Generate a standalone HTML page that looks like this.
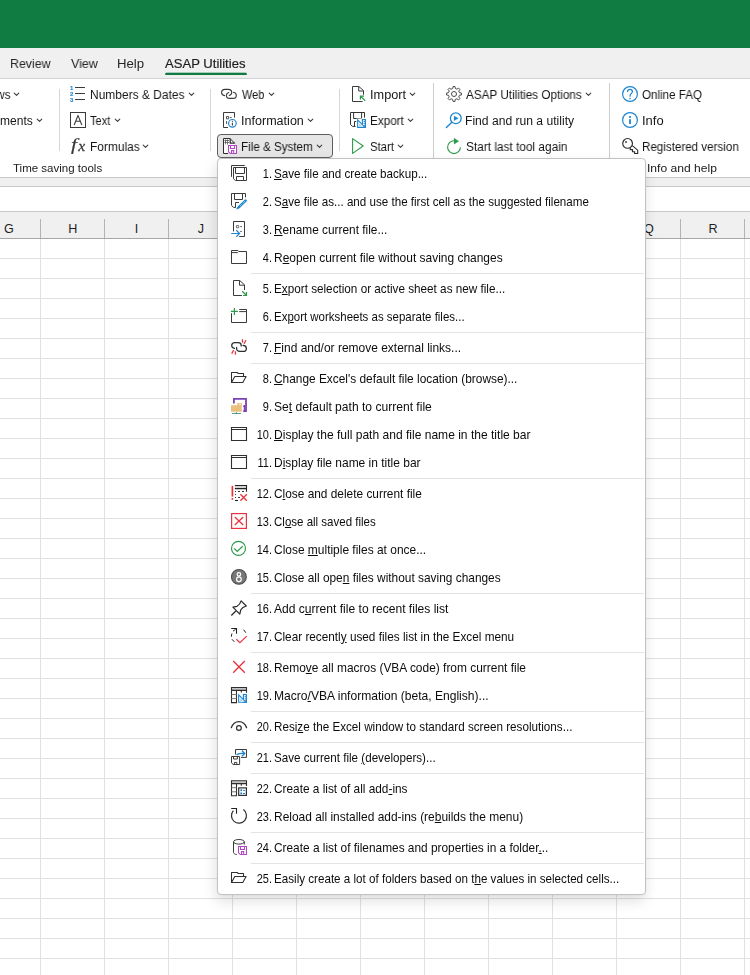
<!DOCTYPE html>
<html><head><meta charset="utf-8"><title>ASAP Utilities - File &amp; System</title>
<style>
html,body{margin:0;padding:0}
body{width:750px;height:975px;position:relative;overflow:hidden;background:#fff;font-family:"Liberation Sans",sans-serif}
body>div,body>svg,body>span{position:absolute}
.t{white-space:pre;line-height:16px;transform-origin:0 50%;display:block}
.g{will-change:transform}
.t u{text-decoration:underline;text-decoration-thickness:1px;text-underline-offset:0.5px}
</style></head><body>
<div style="left:0px;top:0px;width:750px;height:48px;background:#107c41;"></div>
<div style="left:0px;top:48px;width:750px;height:30px;background:#f0f0f0;"></div>
<div style="left:0px;top:78px;width:750px;height:1px;background:#d2d2d2;"></div>
<div style="left:0px;top:177px;width:750px;height:1px;background:#c8c8c8;"></div>
<div style="left:0px;top:178px;width:750px;height:8px;background:#f0f0f0;"></div>
<div style="left:0px;top:186px;width:750px;height:1px;background:#c8c8c8;"></div>
<div style="left:0px;top:211px;width:750px;height:1px;background:#c8c8c8;"></div>
<div style="left:0px;top:212px;width:750px;height:26px;background:#f0f0f0;"></div>
<div style="left:0px;top:238px;width:750px;height:1px;background:#a6a6a6;"></div>
<div style="left:165px;top:73px;width:82px;height:2px;background:#107c41;border-radius:1px;"></div>
<div style="left:166px;top:72px;width:80px;height:1px;background:#107c41;opacity:0.3;"></div>
<div style="left:40px;top:219px;width:1px;height:19px;background:#b4b4b4;"></div>
<div style="left:40px;top:239px;width:1px;height:736px;background:#e1e1e1;"></div>
<div style="left:104px;top:219px;width:1px;height:19px;background:#b4b4b4;"></div>
<div style="left:104px;top:239px;width:1px;height:736px;background:#e1e1e1;"></div>
<div style="left:168px;top:219px;width:1px;height:19px;background:#b4b4b4;"></div>
<div style="left:168px;top:239px;width:1px;height:736px;background:#e1e1e1;"></div>
<div style="left:232px;top:219px;width:1px;height:19px;background:#b4b4b4;"></div>
<div style="left:232px;top:239px;width:1px;height:736px;background:#e1e1e1;"></div>
<div style="left:296px;top:219px;width:1px;height:19px;background:#b4b4b4;"></div>
<div style="left:296px;top:239px;width:1px;height:736px;background:#e1e1e1;"></div>
<div style="left:360px;top:219px;width:1px;height:19px;background:#b4b4b4;"></div>
<div style="left:360px;top:239px;width:1px;height:736px;background:#e1e1e1;"></div>
<div style="left:424px;top:219px;width:1px;height:19px;background:#b4b4b4;"></div>
<div style="left:424px;top:239px;width:1px;height:736px;background:#e1e1e1;"></div>
<div style="left:488px;top:219px;width:1px;height:19px;background:#b4b4b4;"></div>
<div style="left:488px;top:239px;width:1px;height:736px;background:#e1e1e1;"></div>
<div style="left:552px;top:219px;width:1px;height:19px;background:#b4b4b4;"></div>
<div style="left:552px;top:239px;width:1px;height:736px;background:#e1e1e1;"></div>
<div style="left:616px;top:219px;width:1px;height:19px;background:#b4b4b4;"></div>
<div style="left:616px;top:239px;width:1px;height:736px;background:#e1e1e1;"></div>
<div style="left:680px;top:219px;width:1px;height:19px;background:#b4b4b4;"></div>
<div style="left:680px;top:239px;width:1px;height:736px;background:#e1e1e1;"></div>
<div style="left:744px;top:219px;width:1px;height:19px;background:#b4b4b4;"></div>
<div style="left:744px;top:239px;width:1px;height:736px;background:#e1e1e1;"></div>
<div style="left:0px;top:258px;width:750px;height:1px;background:#e1e1e1;"></div>
<div style="left:0px;top:278px;width:750px;height:1px;background:#e1e1e1;"></div>
<div style="left:0px;top:298px;width:750px;height:1px;background:#e1e1e1;"></div>
<div style="left:0px;top:318px;width:750px;height:1px;background:#e1e1e1;"></div>
<div style="left:0px;top:338px;width:750px;height:1px;background:#e1e1e1;"></div>
<div style="left:0px;top:358px;width:750px;height:1px;background:#e1e1e1;"></div>
<div style="left:0px;top:378px;width:750px;height:1px;background:#e1e1e1;"></div>
<div style="left:0px;top:398px;width:750px;height:1px;background:#e1e1e1;"></div>
<div style="left:0px;top:418px;width:750px;height:1px;background:#e1e1e1;"></div>
<div style="left:0px;top:438px;width:750px;height:1px;background:#e1e1e1;"></div>
<div style="left:0px;top:458px;width:750px;height:1px;background:#e1e1e1;"></div>
<div style="left:0px;top:478px;width:750px;height:1px;background:#e1e1e1;"></div>
<div style="left:0px;top:498px;width:750px;height:1px;background:#e1e1e1;"></div>
<div style="left:0px;top:518px;width:750px;height:1px;background:#e1e1e1;"></div>
<div style="left:0px;top:538px;width:750px;height:1px;background:#e1e1e1;"></div>
<div style="left:0px;top:558px;width:750px;height:1px;background:#e1e1e1;"></div>
<div style="left:0px;top:578px;width:750px;height:1px;background:#e1e1e1;"></div>
<div style="left:0px;top:598px;width:750px;height:1px;background:#e1e1e1;"></div>
<div style="left:0px;top:618px;width:750px;height:1px;background:#e1e1e1;"></div>
<div style="left:0px;top:638px;width:750px;height:1px;background:#e1e1e1;"></div>
<div style="left:0px;top:658px;width:750px;height:1px;background:#e1e1e1;"></div>
<div style="left:0px;top:678px;width:750px;height:1px;background:#e1e1e1;"></div>
<div style="left:0px;top:698px;width:750px;height:1px;background:#e1e1e1;"></div>
<div style="left:0px;top:718px;width:750px;height:1px;background:#e1e1e1;"></div>
<div style="left:0px;top:738px;width:750px;height:1px;background:#e1e1e1;"></div>
<div style="left:0px;top:758px;width:750px;height:1px;background:#e1e1e1;"></div>
<div style="left:0px;top:778px;width:750px;height:1px;background:#e1e1e1;"></div>
<div style="left:0px;top:798px;width:750px;height:1px;background:#e1e1e1;"></div>
<div style="left:0px;top:818px;width:750px;height:1px;background:#e1e1e1;"></div>
<div style="left:0px;top:838px;width:750px;height:1px;background:#e1e1e1;"></div>
<div style="left:0px;top:858px;width:750px;height:1px;background:#e1e1e1;"></div>
<div style="left:0px;top:878px;width:750px;height:1px;background:#e1e1e1;"></div>
<div style="left:0px;top:898px;width:750px;height:1px;background:#e1e1e1;"></div>
<div style="left:0px;top:918px;width:750px;height:1px;background:#e1e1e1;"></div>
<div style="left:0px;top:938px;width:750px;height:1px;background:#e1e1e1;"></div>
<div style="left:0px;top:958px;width:750px;height:1px;background:#e1e1e1;"></div>
<div style="left:59px;top:89px;width:1px;height:62px;background:#d6d6d6;"></div>
<div style="left:210px;top:89px;width:1px;height:62px;background:#d6d6d6;"></div>
<div style="left:339px;top:89px;width:1px;height:62px;background:#d6d6d6;"></div>
<div style="left:433px;top:83px;width:1px;height:90px;background:#cecece;"></div>
<div style="left:609px;top:83px;width:1px;height:90px;background:#cecece;"></div>
<div style="left:217px;top:134px;width:114px;height:22px;background:#e6e6e6;border:1px solid #5e5e5e;border-radius:4px"></div>
<svg style="left:13.20px;top:92.3px" width="7" height="5" viewBox="0 0 7 5"><path d="M1.2 1.1 L3.5 3.4 L5.8 1.1" fill="none" stroke="#3a3a3a" stroke-width="1.05" stroke-linecap="round" stroke-linejoin="round"/></svg>
<svg style="left:36.30px;top:118.3px" width="7" height="5" viewBox="0 0 7 5"><path d="M1.2 1.1 L3.5 3.4 L5.8 1.1" fill="none" stroke="#3a3a3a" stroke-width="1.05" stroke-linecap="round" stroke-linejoin="round"/></svg>
<svg style="left:187.60px;top:92.3px" width="7" height="5" viewBox="0 0 7 5"><path d="M1.2 1.1 L3.5 3.4 L5.8 1.1" fill="none" stroke="#3a3a3a" stroke-width="1.05" stroke-linecap="round" stroke-linejoin="round"/></svg>
<svg style="left:114.10px;top:118.3px" width="7" height="5" viewBox="0 0 7 5"><path d="M1.2 1.1 L3.5 3.4 L5.8 1.1" fill="none" stroke="#3a3a3a" stroke-width="1.05" stroke-linecap="round" stroke-linejoin="round"/></svg>
<svg style="left:142.10px;top:144.3px" width="7" height="5" viewBox="0 0 7 5"><path d="M1.2 1.1 L3.5 3.4 L5.8 1.1" fill="none" stroke="#3a3a3a" stroke-width="1.05" stroke-linecap="round" stroke-linejoin="round"/></svg>
<svg style="left:268.00px;top:92.3px" width="7" height="5" viewBox="0 0 7 5"><path d="M1.2 1.1 L3.5 3.4 L5.8 1.1" fill="none" stroke="#3a3a3a" stroke-width="1.05" stroke-linecap="round" stroke-linejoin="round"/></svg>
<svg style="left:306.70px;top:118.3px" width="7" height="5" viewBox="0 0 7 5"><path d="M1.2 1.1 L3.5 3.4 L5.8 1.1" fill="none" stroke="#3a3a3a" stroke-width="1.05" stroke-linecap="round" stroke-linejoin="round"/></svg>
<svg style="left:409.20px;top:92.3px" width="7" height="5" viewBox="0 0 7 5"><path d="M1.2 1.1 L3.5 3.4 L5.8 1.1" fill="none" stroke="#3a3a3a" stroke-width="1.05" stroke-linecap="round" stroke-linejoin="round"/></svg>
<svg style="left:407.00px;top:118.3px" width="7" height="5" viewBox="0 0 7 5"><path d="M1.2 1.1 L3.5 3.4 L5.8 1.1" fill="none" stroke="#3a3a3a" stroke-width="1.05" stroke-linecap="round" stroke-linejoin="round"/></svg>
<svg style="left:397.20px;top:144.3px" width="7" height="5" viewBox="0 0 7 5"><path d="M1.2 1.1 L3.5 3.4 L5.8 1.1" fill="none" stroke="#3a3a3a" stroke-width="1.05" stroke-linecap="round" stroke-linejoin="round"/></svg>
<svg style="left:585.20px;top:92.3px" width="7" height="5" viewBox="0 0 7 5"><path d="M1.2 1.1 L3.5 3.4 L5.8 1.1" fill="none" stroke="#3a3a3a" stroke-width="1.05" stroke-linecap="round" stroke-linejoin="round"/></svg>
<svg style="left:316.30px;top:144.3px" width="7" height="5" viewBox="0 0 7 5"><path d="M1.2 1.1 L3.5 3.4 L5.8 1.1" fill="none" stroke="#3a3a3a" stroke-width="1.05" stroke-linecap="round" stroke-linejoin="round"/></svg>
<svg style="left:0;top:0" width="750" height="180" viewBox="0 0 750 180"><path d="M228 153.5 H223.5 V138.5 H230 L234.6 143.2 V146 H228 Z" fill="#fff" stroke="none" stroke-width="0" /><path d="M228 153.5 H223.5 V138.5 H230 L234.6 143.2" fill="none" stroke="#2e2e2e" stroke-width="1" stroke-linejoin="round"/><path d="M230.2 138.5 V143.2 H234.8" fill="none" stroke="#2e2e2e" stroke-width="1.25" stroke-linejoin="miter"/><path d="M224.4 140.5 H229.2 M224.4 142.5 H229.2 M225.5 139.4 V144.4 M227.5 139.4 V144.4" fill="none" stroke="#666" stroke-width="0.9" /><path d="M228.5 145.5 H236.5 V153.5 H230.3 L228.5 151.8 Z" fill="#fff" stroke="#b247c4" stroke-width="1.05" stroke-linejoin="miter"/><path d="M230.5 145.5 V148.5 H234.5 V145.5" fill="none" stroke="#b247c4" stroke-width="1.05" /><path d="M231.5 153.5 V150.6 H233.7 V153.5" fill="none" stroke="#b247c4" stroke-width="1.05" /></svg>
<svg style="left:0;top:0;will-change:transform" width="750" height="180" viewBox="0 0 750 180"><g font-family="Liberation Sans" font-weight="700" font-size="6px" fill="#1e86d0" stroke="#1e86d0" stroke-width="0.12"><text x="69.9" y="90.1">1</text><text x="69.9" y="96.1">2</text><text x="69.9" y="102.1">3</text></g><path d="M75 87.5 H85 M75 93.5 H85 M75 99.5 H85" fill="none" stroke="#3b3b3b" stroke-width="1" /><rect x="70.5" y="112.5" width="15" height="15" fill="#fff" stroke="#3b3b3b"/><path d="M74.2 125 L78 115.4 L81.8 125 M75.6 121.3 H80.4" fill="none" stroke="#3b3b3b" stroke-width="1.1" stroke-linejoin="round"/><text transform="translate(70.9 150.3) scale(1.22 1)" font-family="Liberation Serif" font-style="italic" font-size="17.5px" fill="#383838" stroke="#383838" stroke-width="0.22">f</text><text transform="translate(78.2 150.9) scale(1.08 1)" font-family="Liberation Serif" font-style="italic" font-size="14.5px" fill="#383838" stroke="#383838" stroke-width="0.25">x</text><path d="M224.6 95.6 C222.6 95.3 221.6 94 221.6 92.5 C221.6 90.6 223.1 89.4 225 89.4 H228.2 C230.2 89.4 231.7 90.6 231.7 92.5 C231.7 93.9 230.7 95 229.2 95.4" fill="none" stroke="#383838" stroke-width="1.08" stroke-linecap="round"/><path d="M233.4 92.3 C235.2 92.6 236.3 93.8 236.3 95.4 C236.3 97.2 234.8 98.4 233 98.4 H229.8 C227.8 98.4 226.4 97.2 226.4 95.4 C226.4 94 227.4 92.9 228.8 92.5" fill="none" stroke="#383838" stroke-width="1.08" stroke-linecap="round"/><path d="M234.5 117.6 V112.5 H223.5 V127.5 H228" fill="none" stroke="#3b3b3b" stroke-width="1" /><path d="M226.5 116.5 h2.1 v2.4 h-2.1 Z M229.8 117.6 h1.9 M226.6 121 v3" fill="none" stroke="#555" stroke-width="1" /><circle cx="232.4" cy="123.3" r="3.8" fill="#fff" stroke="#1e86d0" stroke-width="1.2"/><path d="M232.4 122.8 V125.6" fill="none" stroke="#3b3b3b" stroke-width="1.1" /><circle cx="232.4" cy="121.3" r="0.65" fill="#3b3b3b"/><path d="M363.5 94.8 V90.6 L358.9 86.5 H352.5 V101.5 H362.6 M358.7 86.5 V91 H363.5" fill="none" stroke="#3b3b3b" stroke-width="1" stroke-linejoin="round"/><path d="M365.2 100.8 L360.6 96.4 M360.4 99.6 V96.2 H364" fill="none" stroke="#2b9a4b" stroke-width="1.2" /><path d="M364.5 117.6 V112.5 H350.5 V124.6 L352.6 126.4 H355.6 M353.6 112.5 V118.5 H361.6 V112.5 M354.5 126.4 V121.5 H356.6" fill="none" stroke="#333" stroke-width="1" stroke-linejoin="miter"/><rect x="356.5" y="118.5" width="10" height="10" fill="#fff"/><rect x="362.4" y="119.6" width="3" height="7.8" fill="#fff" stroke="#1e86d0" stroke-width="1.15"/><path d="M363.6 121.5 H365 M363.6 123.4 H365 M364 125.3 H365" stroke="#1e86d0" stroke-width="0.9" fill="none"/><path d="M357.65 119.9 L365.1 127.35 H357.65 Z" fill="#fff" stroke="#1e86d0" stroke-width="1.1" stroke-linejoin="miter"/><path d="M359.5 123.7 L361.6 125.8 H359.5 Z" fill="#1e86d0" opacity="0.75"/><rect x="360.0" y="124.7" width="0.8" height="0.8" fill="#fff" opacity="0.8"/><path d="M352.6 138.6 L363.2 146 L352.6 153.4 Z" fill="none" stroke="#2b9a4b" stroke-width="1.1" stroke-linejoin="round"/><path d="M452.69 88.55 L453.00 86.57 L455.00 86.57 L455.31 88.55 L456.93 89.23 L458.55 88.04 L459.96 89.45 L458.77 91.07 L459.45 92.69 L461.43 93.00 L461.43 95.00 L459.45 95.31 L458.77 96.93 L459.96 98.55 L458.55 99.96 L456.93 98.77 L455.31 99.45 L455.00 101.43 L453.00 101.43 L452.69 99.45 L451.07 98.77 L449.45 99.96 L448.04 98.55 L449.23 96.93 L448.55 95.31 L446.57 95.00 L446.57 93.00 L448.55 92.69 L449.23 91.07 L448.04 89.45 L449.45 88.04 L451.07 89.23 Z" fill="none" stroke="#4a4a4a" stroke-width="1" stroke-linejoin="round"/><circle cx="454" cy="94" r="2.5" fill="none" stroke="#4a4a4a" stroke-width="1"/><circle cx="455.8" cy="118.3" r="5.4" fill="none" stroke="#1e86d0" stroke-width="1.3"/><path d="M451.6 122.5 L446.4 127.6" fill="none" stroke="#1e86d0" stroke-width="1.4" stroke-linecap="round"/><path d="M454 116 L458.4 118.3 L454 120.7 Z" fill="#1e86d0" stroke="#1e86d0" stroke-width="0.2" /><path d="M454 140.8 A6.4 6.4 0 1 0 460.4 147.2" fill="none" stroke="#2b9a4b" stroke-width="1.1" /><path d="M454 138 L458.8 141.2 L454 144.2 Z" fill="#2b9a4b" stroke="#2b9a4b" stroke-width="0.2" /><circle cx="630" cy="94" r="7.4" fill="none" stroke="#1e86d0" stroke-width="1.2"/><path d="M627.6 91.6 C627.6 90 628.6 89.4 630 89.4 C631.4 89.4 632.4 90.2 632.4 91.5 C632.4 93.4 630 93.6 630 96.2" fill="none" stroke="#1e86d0" stroke-width="1.2" stroke-linecap="round"/><circle cx="630" cy="98.6" r="0.8" fill="#1e86d0"/><circle cx="630" cy="120" r="7.4" fill="none" stroke="#1e86d0" stroke-width="1.2"/><rect x="629.1" y="119.2" width="1.8" height="4.8" fill="#1e86d0"/><rect x="629.1" y="116.1" width="1.8" height="1.8" fill="#1e86d0"/><circle cx="627.6" cy="143.4" r="4.85" fill="#fff" stroke="#2c2c2c" stroke-width="1.15"/><rect x="625.2" y="141.2" width="1.6" height="1.6" fill="#2c2c2c"/><path d="M632.3 145.6 L637.7 150.2 V153.5 H634.6 V151.8 H632.5 V149.6 H630.3 V147.7" fill="none" stroke="#2c2c2c" stroke-width="1.1" stroke-linejoin="miter"/></svg>
<span class="t g" style="left:10.35px;top:56.10px;font-size:13px;color:#262626;transform:scaleX(0.9518);">Review</span>
<span class="t g" style="left:71.06px;top:56.10px;font-size:13px;color:#262626;transform:scaleX(0.9622);">View</span>
<span class="t g" style="left:117.39px;top:56.10px;font-size:13px;color:#262626;transform:scaleX(1.0139);">Help</span>
<span class="t g" style="left:165.40px;top:56.10px;font-size:13px;color:#1c1c1c;transform:scaleX(1.0063);-webkit-text-stroke:0.18px #1c1c1c;">ASAP Utilities</span>
<span class="t g" style="left:-4.50px;top:86.84px;font-size:12px;color:#161616;transform:scaleX(0.9825);">ws</span>
<span class="t g" style="left:0.25px;top:112.84px;font-size:12px;color:#161616;transform:scaleX(1.0032);">ments</span>
<span class="t g" style="left:89.60px;top:86.84px;font-size:12px;color:#161616;transform:scaleX(0.9973);">Numbers &amp; Dates</span>
<span class="t g" style="left:90.37px;top:112.84px;font-size:12px;color:#161616;transform:scaleX(0.9195);">Text</span>
<span class="t g" style="left:89.61px;top:138.84px;font-size:12px;color:#161616;transform:scaleX(0.9938);">Formulas</span>
<span class="t g" style="left:242.00px;top:86.84px;font-size:12px;color:#161616;transform:scaleX(0.9167);">Web</span>
<span class="t g" style="left:240.95px;top:112.84px;font-size:12px;color:#161616;transform:scaleX(1.0472);">Information</span>
<span class="t g" style="left:241.03px;top:138.84px;font-size:12px;color:#161616;transform:scaleX(0.9689);">File &amp; System</span>
<span class="t g" style="left:369.54px;top:86.84px;font-size:12px;color:#161616;transform:scaleX(1.0606);">Import</span>
<span class="t g" style="left:369.62px;top:112.84px;font-size:12px;color:#161616;transform:scaleX(0.9778);">Export</span>
<span class="t g" style="left:370.13px;top:138.84px;font-size:12px;color:#161616;transform:scaleX(0.9455);">Start</span>
<span class="t g" style="left:466.40px;top:86.84px;font-size:12px;color:#161616;transform:scaleX(0.9763);">ASAP Utilities Options</span>
<span class="t g" style="left:465.39px;top:112.84px;font-size:12px;color:#161616;transform:scaleX(1.0093);">Find and run a utility</span>
<span class="t g" style="left:465.91px;top:138.84px;font-size:12px;color:#161616;transform:scaleX(0.9872);">Start last tool again</span>
<span class="t g" style="left:642.12px;top:86.84px;font-size:12px;color:#161616;transform:scaleX(0.9672);">Online FAQ</span>
<span class="t g" style="left:641.52px;top:112.84px;font-size:12px;color:#161616;transform:scaleX(1.0811);">Info</span>
<span class="t g" style="left:641.63px;top:138.84px;font-size:12px;color:#161616;transform:scaleX(0.9669);">Registered version</span>
<span class="t g" style="left:12.75px;top:160.02px;font-size:11.5px;color:#202020;transform:scaleX(1.0011);">Time saving tools</span>
<span class="t g" style="left:646.55px;top:160.02px;font-size:11.5px;color:#202020;transform:scaleX(1.0523);">Info and help</span>
<span class="t" style="left:8.80px;top:220.63px;font-size:12.6px;color:#1e1e1e;transform:translateX(-50%);">G</span>
<span class="t" style="left:72.90px;top:220.63px;font-size:12.6px;color:#1e1e1e;transform:translateX(-50%);">H</span>
<span class="t" style="left:136.60px;top:220.63px;font-size:12.6px;color:#1e1e1e;transform:translateX(-50%);">I</span>
<span class="t" style="left:200.80px;top:220.63px;font-size:12.6px;color:#1e1e1e;transform:translateX(-50%);">J</span>
<span class="t" style="left:648.90px;top:220.63px;font-size:12.6px;color:#1e1e1e;transform:translateX(-50%);">Q</span>
<span class="t" style="left:713.10px;top:220.63px;font-size:12.6px;color:#1e1e1e;transform:translateX(-50%);">R</span>
<div id="menu" style="left:217px;top:158px;width:427px;height:735px;background:#fff;border:1px solid #c2c2c2;border-radius:4px;box-shadow:-1px 6px 14px rgba(0,0,0,0.13),0 1px 3px rgba(0,0,0,0.04)"></div>
<div style="left:251px;top:273px;width:393px;height:1px;background:#e3e3e3"></div>
<div style="left:251px;top:332px;width:393px;height:1px;background:#e3e3e3"></div>
<div style="left:251px;top:363px;width:393px;height:1px;background:#e3e3e3"></div>
<div style="left:251px;top:478px;width:393px;height:1px;background:#e3e3e3"></div>
<div style="left:251px;top:593px;width:393px;height:1px;background:#e3e3e3"></div>
<div style="left:251px;top:652px;width:393px;height:1px;background:#e3e3e3"></div>
<div style="left:251px;top:711px;width:393px;height:1px;background:#e3e3e3"></div>
<div style="left:251px;top:742px;width:393px;height:1px;background:#e3e3e3"></div>
<div style="left:251px;top:773px;width:393px;height:1px;background:#e3e3e3"></div>
<div style="left:251px;top:832px;width:393px;height:1px;background:#e3e3e3"></div>
<div style="left:251px;top:863px;width:393px;height:1px;background:#e3e3e3"></div>
<svg style="left:0;top:0" width="750" height="975" viewBox="0 0 750 975"><path d="M231.5 176.8 V165.5 H244.8" fill="none" stroke="#3b3b3b" stroke-width="1" /><path d="M233.5 167.5 H246.5 V180.5 H235.4 L233.5 178.8 Z M235.5 167.5 V173.5 H244.5 V167.5 M236.5 180.5 V176.5 H243.5 V180.5" fill="none" stroke="#3b3b3b" stroke-width="1" stroke-linejoin="miter"/><path d="M245.5 197.4 V193.5 H231.5 V205.4 L233.6 207.4 H235.8 M234.5 193.5 V199.5 H242.5 V193.5 M235.5 207.4 V202.5 H239" fill="none" stroke="#3b3b3b" stroke-width="1" stroke-linejoin="miter"/><path d="M245.6 200.6 L238.6 207.4" fill="none" stroke="#1e86d0" stroke-width="2.6" stroke-linecap="round"/><path d="M238.6 207.4 L237 208.8" fill="none" stroke="#1e86d0" stroke-width="1.2" stroke-linecap="round"/><path d="M245 201.2 L239.6 206.4" fill="none" stroke="#fff" stroke-width="0.7" stroke-dasharray="1 0.9"/><path d="M233.5 231.4 V221.5 H244.5 V236.5 H239.2" fill="none" stroke="#3b3b3b" stroke-width="1" /><path d="M236.5 225.6 h2.2 v2.2 h-2.2 Z" fill="none" stroke="#666" stroke-width="0.9" /><path d="M240.2 226.6 H242 M240.2 231.4 H242" fill="none" stroke="#555" stroke-width="0.9" /><path d="M231.2 233.5 H239.4 M236.3 230.3 L239.6 233.5 L236.3 236.7" fill="none" stroke="#1e86d0" stroke-width="1.2" /><path d="M231.5 250.5 H238 L239 251.5 H246.5 V263.5 H231.5 Z M231.5 252.6 H237.6 L238.7 251.5" fill="none" stroke="#3b3b3b" stroke-width="1" stroke-linejoin="round"/><path d="M244.5 290 V284.8 L239.7 280.5 H233.5 V295.5 H241.9 M239.5 280.5 V285.2 H244.5" fill="none" stroke="#3b3b3b" stroke-width="1" stroke-linejoin="round"/><path d="M242.2 291.2 L246.4 295.2 M246.5 291.9 V295.5 H243" fill="none" stroke="#2b9a4b" stroke-width="1.2" /><path d="M231.5 313.2 V322.5 H246.5 V309.5 H239.2 M239.2 311.6 H246.5" fill="none" stroke="#3b3b3b" stroke-width="1" /><path d="M230.9 311.4 H237.9 M234.4 308 V314.9" fill="none" stroke="#2b9a4b" stroke-width="1.2" /><path d="M234.4 348.4 C232.6 348.1 231.7 346.9 231.7 345.5 C231.7 343.8 233.1 342.6 234.9 342.6 H238 C239.9 342.6 241.2 343.8 241.2 345.2 V346" fill="none" stroke="#2e2e2e" stroke-width="1.25" stroke-linecap="round"/><path d="M243 345.4 C245 345.6 246.4 346.8 246.4 348.4 C246.4 350.2 244.9 351.4 243.1 351.4 H240 C238 351.4 236.6 350.2 236.6 348.6 V347.4" fill="none" stroke="#2e2e2e" stroke-width="1.25" stroke-linecap="round"/><path d="M242.4 339.2 L242.6 342.6 M246 340.3 L244.1 343.7 M233.6 350.1 L231.7 353.7 M235.3 351.2 L235.5 354.6" fill="none" stroke="#e8343e" stroke-width="1.3" /><path d="M243.5 376.5 V373.5 H238.3 L237.1 372.5 H231.5 V382.5 L234.8 376.5 H246.1 L242.8 382.5 H231.5" fill="none" stroke="#2e2e2e" stroke-width="1.05" stroke-linejoin="round"/><path d="M233.9 403.6 V398.8 H246 V411.2 H243.2" fill="none" stroke="#7c41b3" stroke-width="1.8" /><path d="M244.4 405 V411" fill="none" stroke="#7c41b3" stroke-width="1.2" /><path d="M243.2 406.2 H245" fill="none" stroke="#7c41b3" stroke-width="1.6" /><path d="M231 405.2 H237.2 V403.1 H241.8 V411.8 H231 Z" fill="#e9c17c" stroke="none" stroke-width="0" /><path d="M239 404.3 H241" fill="none" stroke="#fff" stroke-width="0.8" /><path d="M232 413.5 H241" fill="none" stroke="#4aa98b" stroke-width="1" /><path d="M235.3 413.6 L236.4 411.9 L237.5 413.6 Z" fill="#666" stroke="none" stroke-width="0" /><path d="M231.5 427.5 H246.5 V440.5 H231.5 Z M231.5 429.5 H246.5" fill="none" stroke="#303030" stroke-width="1.1" /><path d="M231.5 455.5 H246.5 V468.5 H231.5 Z M231.5 457.5 H246.5" fill="none" stroke="#303030" stroke-width="1.1" /><path d="M232.4 485.9 V496.6" fill="none" stroke="#e8343e" stroke-width="1.7" /><rect x="231.55" y="498.1" width="1.7" height="1.7" fill="#e8343e"/><rect x="235" y="486" width="11.5" height="2.5" fill="#d4d4d4"/><path d="M234.9 485.5 H246.5 V491.8 M234.9 488.6 H246.5" fill="none" stroke="#222" stroke-width="1.1" /><path d="M235 491.5 h1 M238 491.5 h2 M242 491.5 h2 M235 494.5 h1 M235 497.5 h1 M238 497.5 h2" fill="none" stroke="#333" stroke-width="1" /><path d="M235 500.5 H238" fill="none" stroke="#222" stroke-width="1.1" /><path d="M240.4 494.3 L246.8 500.8 M246.8 494.3 L240.4 500.8" fill="none" stroke="#e8343e" stroke-width="1.3" /><rect x="231.6" y="513.6" width="14.8" height="14.8" fill="none" stroke="#e8343e" stroke-width="1.2"/><path d="M234.8 517 L243.2 525 M243.2 517 L234.8 525" fill="none" stroke="#e8343e" stroke-width="1.3" /><circle cx="238.5" cy="548.4" r="7" fill="none" stroke="#2b9a4b" stroke-width="1.2"/><path d="M234.2 548.4 L237.2 551.4 L242.7 546.2" fill="none" stroke="#2b9a4b" stroke-width="1.3" /><circle cx="238.9" cy="576.9" r="7.4" fill="#787878" stroke="#4c4c4c" stroke-width="1.1"/><circle cx="238.9" cy="574.3" r="1.75" fill="none" stroke="#fff" stroke-width="1.2"/><circle cx="238.9" cy="579.2" r="2.35" fill="none" stroke="#fff" stroke-width="1.2"/><path d="M241.1 600.8 L246.3 606 C243.6 606.7 241.8 608 240.7 610 L239.8 614.2 L232.9 607.2 L237 606.3 C239 605.1 240.3 603.5 241.1 600.8 Z" fill="none" stroke="#2a2a2a" stroke-width="1.2" stroke-linejoin="round"/><path d="M235.8 611 L231.3 615.5" fill="none" stroke="#2a2a2a" stroke-width="1.2" /><path d="M231.2 628.5 H236.5 V633.8" fill="none" stroke="#222" stroke-width="1.1" /><path d="M235.6 629.4 L233 631.2 M231.9 633.6 L231.3 636.7 M232 639.3 L234.3 641.8 M243.6 629.7 L245.8 632.7" fill="none" stroke="#222" stroke-width="1" /><path d="M236.3 639.3 L239.9 642.7 L246.8 636.1" fill="none" stroke="#e8343e" stroke-width="1.2" /><path d="M233.2 661.1 L244.8 672.7 M244.8 661.1 L233.2 672.7" fill="none" stroke="#e8343e" stroke-width="1.35" /><rect x="232" y="688" width="14.5" height="2.2" fill="#c4c4c4"/><path d="M246.5 692.8 V687.5 H231.5 V702.6 H236.5 V690.4 M231.5 690.4 H246.5 M241.3 690.4 V692.6" fill="none" stroke="#2e2e2e" stroke-width="1.1" /><path d="M231.5 694.5 H236.5 M231.5 698.6 H236.5" fill="none" stroke="#777" stroke-width="1" /><rect x="237.5" y="693.4" width="10" height="10" fill="#fff"/><rect x="243.4" y="694.5" width="3" height="7.8" fill="#fff" stroke="#1e86d0" stroke-width="1.15"/><path d="M244.6 696.4 H246 M244.6 698.3 H246 M245 700.1999999999999 H246" stroke="#1e86d0" stroke-width="0.9" fill="none"/><path d="M238.65 694.8 L246.1 702.25 H238.65 Z" fill="#fff" stroke="#1e86d0" stroke-width="1.1" stroke-linejoin="miter"/><path d="M240.5 698.6 L242.6 700.6999999999999 H240.5 Z" fill="#1e86d0" opacity="0.75"/><rect x="241.0" y="699.6" width="0.8" height="0.8" fill="#fff" opacity="0.8"/><path d="M231.3 727.7 C232.6 723.8 235.4 721.5 238.9 721.5 C242.4 721.5 245.3 723.8 246.6 727.7" fill="none" stroke="#2e2e2e" stroke-width="1.25" stroke-linecap="round"/><circle cx="238.9" cy="728" r="2.4" fill="none" stroke="#2e2e2e" stroke-width="1.2"/><path d="M235.5 754.5 V749.5 H246.5 V757.4 H241" fill="none" stroke="#3b3b3b" stroke-width="1" /><path d="M237.1 754.6 C239 753.2 241.5 753.2 244.2 753.4 M242.3 751 L244.8 753.4 L242.3 755.8" fill="none" stroke="#1e86d0" stroke-width="1.4" stroke-linecap="round" stroke-linejoin="round"/><path d="M231.5 756.5 H239.6 V764.5 H233.2 L231.5 762.9 Z M233.5 756.5 V759 H237.4 V756.5 M234.4 764.5 V762.4 H236.8 V764.5" fill="#fff" stroke="#3b3b3b" stroke-width="1" stroke-linejoin="round"/><rect x="232" y="781.2" width="14.5" height="2.2" fill="#c4c4c4"/><path d="M246.5 786.0 V780.7 H231.5 V795.8000000000001 H236.5 V783.6 M231.5 783.6 H246.5 M241.3 783.6 V785.8000000000001" fill="none" stroke="#2e2e2e" stroke-width="1.1" /><path d="M231.5 787.7 H236.5 M231.5 791.8000000000001 H236.5" fill="none" stroke="#777" stroke-width="1" /><rect x="238.7" y="787.9" width="7.7" height="7.5" fill="#fff" stroke="#2e2e2e" stroke-width="1.2"/><rect x="240.4" y="789.4" width="1.7" height="1.7" fill="#1272cc"/><rect x="240.4" y="792.5" width="1.7" height="1.7" fill="#1272cc"/><path d="M243.1 790.4 H244.9 M243.1 793.5 H244.9" fill="none" stroke="#1272cc" stroke-width="1" /><path d="M233.4 810.6 A7.5 7.5 0 1 0 243.4 809.6" fill="none" stroke="#2e2e2e" stroke-width="1.2" /><path d="M231.2 808.5 H236.5 V813.8" fill="none" stroke="#222" stroke-width="1.1" /><ellipse cx="238.9" cy="841.8" rx="5.4" ry="2.3" fill="#fff" stroke="#3b3b3b" stroke-width="1"/><path d="M233.5 841.8 V852.6 C233.8 853.6 235 854.2 236.8 854.6 M244.3 841.8 V844.6" fill="none" stroke="#3b3b3b" stroke-width="1" /><path d="M238.5 846.5 H246.5 V854.5 H240.3 L238.5 852.8 Z" fill="#fff" stroke="#b247c4" stroke-width="1.05" stroke-linejoin="miter"/><path d="M240.5 846.5 V849.5 H244.5 V846.5" fill="none" stroke="#b247c4" stroke-width="1.05" /><path d="M241.5 854.5 V851.6 H243.7 V854.5" fill="none" stroke="#b247c4" stroke-width="1.05" /><path d="M243.5 876.5 V873.5 H238.3 L237.1 872.5 H231.5 V882.5 L234.8 876.5 H246.1 L242.8 882.5 H231.5" fill="none" stroke="#2e2e2e" stroke-width="1.05" stroke-linejoin="round"/></svg>
<span class="t" style="left:271.70px;top:165.87px;font-size:12.2px;color:#0c0c0c;transform:translateX(-100%) scaleX(0.90);transform-origin:100% 50%;">1.</span>
<span class="t" style="left:273.70px;top:165.87px;font-size:12.2px;color:#0c0c0c;transform:scaleX(0.9549);"><u>S</u>ave file and create backup...</span>
<span class="t" style="left:271.70px;top:193.87px;font-size:12.2px;color:#0c0c0c;transform:translateX(-100%) scaleX(0.90);transform-origin:100% 50%;">2.</span>
<span class="t" style="left:273.70px;top:193.87px;font-size:12.2px;color:#0c0c0c;transform:scaleX(0.9524);">S<u>a</u>ve file as... and use the first cell as the suggested filename</span>
<span class="t" style="left:271.70px;top:221.87px;font-size:12.2px;color:#0c0c0c;transform:translateX(-100%) scaleX(0.90);transform-origin:100% 50%;">3.</span>
<span class="t" style="left:273.70px;top:221.87px;font-size:12.2px;color:#0c0c0c;transform:scaleX(0.9723);"><u>R</u>ename current file...</span>
<span class="t" style="left:271.70px;top:249.87px;font-size:12.2px;color:#0c0c0c;transform:translateX(-100%) scaleX(0.90);transform-origin:100% 50%;">4.</span>
<span class="t" style="left:273.70px;top:249.87px;font-size:12.2px;color:#0c0c0c;transform:scaleX(0.9809);">R<u>e</u>open current file without saving changes</span>
<span class="t" style="left:271.70px;top:280.87px;font-size:12.2px;color:#0c0c0c;transform:translateX(-100%) scaleX(0.90);transform-origin:100% 50%;">5.</span>
<span class="t" style="left:273.70px;top:280.87px;font-size:12.2px;color:#0c0c0c;transform:scaleX(0.9616);">E<u>x</u>port selection or active sheet as new file...</span>
<span class="t" style="left:271.70px;top:308.87px;font-size:12.2px;color:#0c0c0c;transform:translateX(-100%) scaleX(0.90);transform-origin:100% 50%;">6.</span>
<span class="t" style="left:273.70px;top:308.87px;font-size:12.2px;color:#0c0c0c;transform:scaleX(0.9409);">Ex<u>p</u>ort worksheets as separate files...</span>
<span class="t" style="left:271.70px;top:339.87px;font-size:12.2px;color:#0c0c0c;transform:translateX(-100%) scaleX(0.90);transform-origin:100% 50%;">7.</span>
<span class="t" style="left:273.70px;top:339.87px;font-size:12.2px;color:#0c0c0c;transform:scaleX(0.9828);"><u>F</u>ind and/or remove external links...</span>
<span class="t" style="left:271.70px;top:370.87px;font-size:12.2px;color:#0c0c0c;transform:translateX(-100%) scaleX(0.90);transform-origin:100% 50%;">8.</span>
<span class="t" style="left:273.70px;top:370.87px;font-size:12.2px;color:#0c0c0c;transform:scaleX(0.9751);"><u>C</u>hange Excel's default file location (browse)...</span>
<span class="t" style="left:271.70px;top:398.87px;font-size:12.2px;color:#0c0c0c;transform:translateX(-100%) scaleX(0.90);transform-origin:100% 50%;">9.</span>
<span class="t" style="left:273.70px;top:398.87px;font-size:12.2px;color:#0c0c0c;transform:scaleX(0.9909);">Se<u>t</u> default path to current file</span>
<span class="t" style="left:271.70px;top:426.87px;font-size:12.2px;color:#0c0c0c;transform:translateX(-100%) scaleX(0.90);transform-origin:100% 50%;">10.</span>
<span class="t" style="left:273.70px;top:426.87px;font-size:12.2px;color:#0c0c0c;transform:scaleX(0.9886);"><u>D</u>isplay the full path and file name in the title bar</span>
<span class="t" style="left:271.70px;top:454.87px;font-size:12.2px;color:#0c0c0c;transform:translateX(-100%) scaleX(0.90);transform-origin:100% 50%;">11.</span>
<span class="t" style="left:273.70px;top:454.87px;font-size:12.2px;color:#0c0c0c;transform:scaleX(0.9835);">D<u>i</u>splay file name in title bar</span>
<span class="t" style="left:271.70px;top:485.87px;font-size:12.2px;color:#0c0c0c;transform:translateX(-100%) scaleX(0.90);transform-origin:100% 50%;">12.</span>
<span class="t" style="left:273.70px;top:485.87px;font-size:12.2px;color:#0c0c0c;transform:scaleX(0.9739);">C<u>l</u>ose and delete current file</span>
<span class="t" style="left:271.70px;top:513.87px;font-size:12.2px;color:#0c0c0c;transform:translateX(-100%) scaleX(0.90);transform-origin:100% 50%;">13.</span>
<span class="t" style="left:273.70px;top:513.87px;font-size:12.2px;color:#0c0c0c;transform:scaleX(0.9445);">Cl<u>o</u>se all saved files</span>
<span class="t" style="left:271.70px;top:541.87px;font-size:12.2px;color:#0c0c0c;transform:translateX(-100%) scaleX(0.90);transform-origin:100% 50%;">14.</span>
<span class="t" style="left:273.70px;top:541.87px;font-size:12.2px;color:#0c0c0c;transform:scaleX(0.9805);">Close <u>m</u>ultiple files at once...</span>
<span class="t" style="left:271.70px;top:569.87px;font-size:12.2px;color:#0c0c0c;transform:translateX(-100%) scaleX(0.90);transform-origin:100% 50%;">15.</span>
<span class="t" style="left:273.70px;top:569.87px;font-size:12.2px;color:#0c0c0c;transform:scaleX(0.9754);">Close all ope<u>n</u> files without saving changes</span>
<span class="t" style="left:271.70px;top:600.87px;font-size:12.2px;color:#0c0c0c;transform:translateX(-100%) scaleX(0.90);transform-origin:100% 50%;">16.</span>
<span class="t" style="left:273.70px;top:600.87px;font-size:12.2px;color:#0c0c0c;transform:scaleX(0.9903);">Add c<u>u</u>rrent file to recent files list</span>
<span class="t" style="left:271.70px;top:628.87px;font-size:12.2px;color:#0c0c0c;transform:translateX(-100%) scaleX(0.90);transform-origin:100% 50%;">17.</span>
<span class="t" style="left:273.70px;top:628.87px;font-size:12.2px;color:#0c0c0c;transform:scaleX(0.9659);">Clear recentl<u>y</u> used files list in the Excel menu</span>
<span class="t" style="left:271.70px;top:659.87px;font-size:12.2px;color:#0c0c0c;transform:translateX(-100%) scaleX(0.90);transform-origin:100% 50%;">18.</span>
<span class="t" style="left:273.70px;top:659.87px;font-size:12.2px;color:#0c0c0c;transform:scaleX(0.9788);">Remo<u>v</u>e all macros (VBA code) from current file</span>
<span class="t" style="left:271.70px;top:687.87px;font-size:12.2px;color:#0c0c0c;transform:translateX(-100%) scaleX(0.90);transform-origin:100% 50%;">19.</span>
<span class="t" style="left:273.70px;top:687.87px;font-size:12.2px;color:#0c0c0c;transform:scaleX(0.9900);">Macro<u>/</u>VBA information (beta, English)...</span>
<span class="t" style="left:271.70px;top:718.87px;font-size:12.2px;color:#0c0c0c;transform:translateX(-100%) scaleX(0.90);transform-origin:100% 50%;">20.</span>
<span class="t" style="left:273.70px;top:718.87px;font-size:12.2px;color:#0c0c0c;transform:scaleX(0.9575);">Resi<u>z</u>e the Excel window to standard screen resolutions...</span>
<span class="t" style="left:271.70px;top:749.87px;font-size:12.2px;color:#0c0c0c;transform:translateX(-100%) scaleX(0.90);transform-origin:100% 50%;">21.</span>
<span class="t" style="left:273.70px;top:749.87px;font-size:12.2px;color:#0c0c0c;transform:scaleX(0.9545);">Save current file <u>(</u>developers)...</span>
<span class="t" style="left:271.70px;top:780.87px;font-size:12.2px;color:#0c0c0c;transform:translateX(-100%) scaleX(0.90);transform-origin:100% 50%;">22.</span>
<span class="t" style="left:273.70px;top:780.87px;font-size:12.2px;color:#0c0c0c;transform:scaleX(0.9708);">Create a list of all add<u>-</u>ins</span>
<span class="t" style="left:271.70px;top:808.87px;font-size:12.2px;color:#0c0c0c;transform:translateX(-100%) scaleX(0.90);transform-origin:100% 50%;">23.</span>
<span class="t" style="left:273.70px;top:808.87px;font-size:12.2px;color:#0c0c0c;transform:scaleX(0.9805);">Reload all installed add-ins (re<u>b</u>uilds the menu)</span>
<span class="t" style="left:271.70px;top:839.87px;font-size:12.2px;color:#0c0c0c;transform:translateX(-100%) scaleX(0.90);transform-origin:100% 50%;">24.</span>
<span class="t" style="left:273.70px;top:839.87px;font-size:12.2px;color:#0c0c0c;transform:scaleX(0.9735);">Create a list of filenames and properties in a folder<u>.</u>..</span>
<span class="t" style="left:271.70px;top:870.87px;font-size:12.2px;color:#0c0c0c;transform:translateX(-100%) scaleX(0.90);transform-origin:100% 50%;">25.</span>
<span class="t" style="left:273.70px;top:870.87px;font-size:12.2px;color:#0c0c0c;transform:scaleX(0.9544);">Easily create a lot of folders based on t<u>h</u>e values in selected cells...</span>
</body></html>
